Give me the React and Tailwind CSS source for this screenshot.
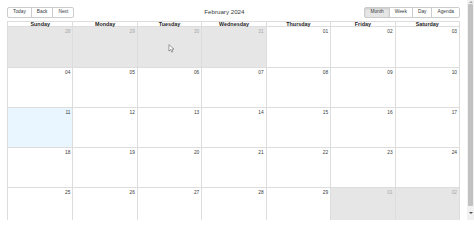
import React from "react";

const DAYS = ["Sunday", "Monday", "Tuesday", "Wednesday", "Thursday", "Friday", "Saturday"];

const pad = (n) => String(n).padStart(2, "0");

// February 2024 month grid, Sunday first
function buildWeeks() {
  const weeks = [];
  const cells = [];
  [28, 29, 30, 31].forEach((d) => cells.push({ day: d, off: true }));
  for (let d = 1; d <= 29; d++) cells.push({ day: d, off: false, today: d === 11 });
  [1, 2].forEach((d) => cells.push({ day: d, off: true }));
  for (let i = 0; i < cells.length; i += 7) weeks.push(cells.slice(i, i + 7));
  return weeks;
}

function ToolbarButton({ label, active, first, last }) {
  return (
    <button
      type="button"
      className={`h-[11px] border border-[#cccccc] px-[5px] text-[4.8px] leading-none text-[#373a3c] ${
        active ? "bg-[#e6e6e6] shadow-[inset_0_1px_2px_rgba(0,0,0,0.12)]" : "bg-white"
      } ${first ? "rounded-l-[2px]" : "-ml-px"} ${last ? "rounded-r-[2px]" : ""}`}
    >
      {label}
    </button>
  );
}

function Cursor() {
  return (
    <svg
      className="pointer-events-none absolute left-[168px] top-[44px] h-[9px] w-[7px]"
      viewBox="0 0 10 14"
    >
      <path d="M1 1 L1 11 L3.6 8.6 L5.4 12.6 L7.2 11.8 L5.5 7.9 L8.8 7.9 Z" fill="#ffffff" stroke="#6b6b6b" strokeWidth="1" />
    </svg>
  );
}

export default function App() {
  const weeks = buildWeeks();

  return (
    <div className="relative flex h-[220px] w-[474px] overflow-hidden bg-white font-['Liberation_Sans',Arial,sans-serif] text-[#373a3c]">
      <div className="flex min-w-0 flex-1 flex-col px-[7px] pt-[7px]">
        {/* Toolbar */}
        <div className="flex h-[11px] items-center justify-between">
          <div className="flex">
            <ToolbarButton label="Today" first />
            <ToolbarButton label="Back" />
            <ToolbarButton label="Next" last />
          </div>
          <span className="ml-[10px] text-[6.2px] leading-none">February 2024</span>
          <div className="flex">
            <ToolbarButton label="Month" active first />
            <ToolbarButton label="Week" />
            <ToolbarButton label="Day" />
            <ToolbarButton label="Agenda" last />
          </div>
        </div>

        {/* Month view */}
        <div className="mt-[3px] flex flex-col border border-b-0 border-[#dddddd]">
          <div className="grid h-[5px] grid-cols-7 border-b border-[#dddddd]">
            {DAYS.map((d, i) => (
              <div
                key={d}
                className={`flex items-center justify-center text-[5.4px] font-bold leading-none text-[#222222] ${
                  i > 0 ? "border-l border-[#dddddd]" : ""
                }`}
              >
                {d}
              </div>
            ))}
          </div>
          {weeks.map((week, wi) => (
            <div
              key={wi}
              className={`grid h-[40px] shrink-0 grid-cols-7 ${wi > 0 ? "border-t border-[#dddddd]" : ""}`}
            >
              {week.map((c, ci) => (
                <div
                  key={ci}
                  className={`flex justify-end pr-[2px] pt-[3px] ${ci > 0 ? "border-l border-[#dddddd]" : ""} ${
                    c.off ? "bg-[#e6e6e6] text-[#a6a6a6]" : c.today ? "bg-[#eaf6ff]" : "bg-white"
                  }`}
                >
                  <span className="text-[4.8px] leading-none">{pad(c.day)}</span>
                </div>
              ))}
            </div>
          ))}
        </div>
      </div>

      {/* Scrollbar */}
      <div className="flex w-[7px] shrink-0 flex-col items-center bg-[#f1f1f1]">
        <div className="flex h-[4px] items-center justify-center">
          <div className="h-0 w-0 border-x-[2px] border-b-[2px] border-x-transparent border-b-[#a3a3a3]" />
        </div>
        <div className="h-[202px] w-[5px] rounded-[1px] bg-[#c1c1c1]" />
        <div className="flex flex-1 items-center justify-center">
          <div className="h-0 w-0 border-x-[2px] border-t-[2px] border-x-transparent border-t-[#505050]" />
        </div>
      </div>

      <Cursor />
    </div>
  );
}
